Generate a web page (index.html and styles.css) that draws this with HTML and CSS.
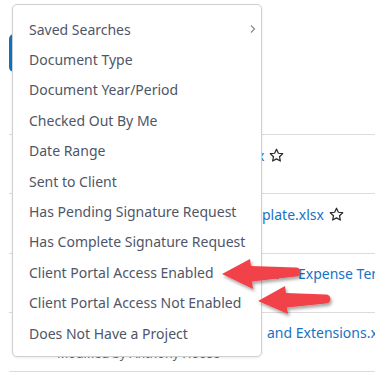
FILE: index.html
```html
<!DOCTYPE html>
<html lang="en">
<head>
    <meta charset="UTF-8">
    <title>Documents - Filters</title>
    <link rel="stylesheet" href="styles.css">
</head>
<body>
<div id="page-container">
    <div class="toolbar">
        <button class="btn-primary" aria-label="Upload"></button>
    </div>
    <div class="file-list">
        <div class="file-row">
            <div class="file-title indent-a">
                <span class="file-link">x</span>
                <svg class="star" viewBox="0 0 16 16"><path d="M8 1.3l2 4.3 4.6.5-3.4 3.2.9 4.6L8 11.6l-4.1 2.3.9-4.6L1.4 6.1 6 5.6z"/></svg>
            </div>
        </div>
        <div class="file-row">
            <div class="file-title indent-b">
                <span class="file-link">plate.xlsx</span>
                <svg class="star" viewBox="0 0 16 16"><path d="M8 1.3l2 4.3 4.6.5-3.4 3.2.9 4.6L8 11.6l-4.1 2.3.9-4.6L1.4 6.1 6 5.6z"/></svg>
            </div>
        </div>
        <div class="file-row">
            <div class="file-title indent-c">
                <span class="file-link"><span class="dots">...</span>Expense Template.xlsx</span>
            </div>
        </div>
        <div class="file-row">
            <div class="file-title indent-d">
                <span class="file-link">and Extensions.xlsx</span>
            </div>
            <div class="file-meta">Modified by Anthony Hoose</div>
        </div>
    </div>
</div>

<div class="filter-menu">
    <div class="menu-item has-sub">
        <span>Saved Searches</span>
        <svg class="chevron" viewBox="0 0 8 10"><path d="M2 1.5L5.5 5 2 8.5"/></svg>
    </div>
    <div class="menu-item">Document Type</div>
    <div class="menu-item">Document Year/Period</div>
    <div class="menu-item">Checked Out By Me</div>
    <div class="menu-item">Date Range</div>
    <div class="menu-item">Sent to Client</div>
    <div class="menu-item">Has Pending Signature Request</div>
    <div class="menu-item">Has Complete Signature Request</div>
    <div class="menu-item">Client Portal Access Enabled</div>
    <div class="menu-item">Client Portal Access Not Enabled</div>
    <div class="menu-item">Does Not Have a Project</div>
</div>

<svg class="callouts" viewBox="0 0 375 378">
    <defs>
        <filter id="arrow-shadow" x="-20%" y="-40%" width="140%" height="180%">
            <feDropShadow dx="1.5" dy="2.5" stdDeviation="1.6" flood-color="#000" flood-opacity="0.35"/>
        </filter>
    </defs>
    <path class="arrow" d="M222 274 L250 259 L251 266 L296 267.5 A4.5 4.5 0 0 1 296 276.5 L252 281.5 L253 289 Z"/>
    <path class="arrow" d="M258 301 L285 286 L286 293 L326 294.5 A4.5 4.5 0 0 1 326 303.5 L287 307.5 L288 314 Z"/>
</svg>
</body>
</html>
```

FILE: styles.css
```css
body {
    margin: 0;
    width: 375px;
    height: 378px;
    overflow: hidden;
    background: #fff;
    font-family: "Noto Sans", "Open Sans", sans-serif;
}

#page-container {
    padding-left: 9px;
}

.toolbar {
    height: 134px;
    padding-top: 34px;
    box-sizing: border-box;
}

.btn-primary {
    display: block;
    height: 38px;
    width: 110px;
    border: none;
    border-radius: 5px;
    background: #0b74c4;
}

.file-list {
    border-top: 1px solid #dcdcdc;
}

.file-row {
    height: 49.25px;
    border-bottom: 1px solid #dcdcdc;
    padding-top: 9px;
    white-space: nowrap;
    overflow: hidden;
}

.file-title {
    display: flex;
    align-items: center;
    height: 22px;
}

.file-link {
    color: #1673c4;
    font-size: 14px;
}

.dots {
    display: inline-block;
    width: 30px;
    color: #1d3d66;
}

.indent-a { padding-left: 248px; }
.indent-b { padding-left: 253px; }
.indent-c { padding-left: 259px; }
.indent-d { padding-left: 258px; }

.star {
    width: 15px;
    height: 15px;
    margin-left: 5px;
    fill: none;
    stroke: #2a2a2a;
    stroke-width: 1.3;
    stroke-linejoin: round;
}

.file-meta {
    padding-left: 48px;
    margin-top: 1px;
    font-size: 12.5px;
    color: #666;
}

.filter-menu {
    position: absolute;
    top: 4px;
    left: 12px;
    width: 250px;
    height: 353px;
    box-sizing: border-box;
    padding-top: 9px;
    background: #fff;
    border: 1px solid #cfcfcf;
    border-radius: 5px;
    box-shadow: 0 1px 3px rgba(0, 0, 0, 0.08);
}

.menu-item {
    display: flex;
    align-items: center;
    justify-content: space-between;
    height: 30.4px;
    padding: 0 4px 0 16px;
    font-size: 14px;
    color: #4e5667;
    white-space: nowrap;
}

.chevron {
    width: 8px;
    height: 10px;
    fill: none;
    stroke: #8a8a8a;
    stroke-width: 1.2;
}

.callouts {
    position: absolute;
    top: 0;
    left: 0;
    width: 375px;
    height: 378px;
}

.arrow {
    fill: #f2424a;
    filter: url(#arrow-shadow);
}
```
